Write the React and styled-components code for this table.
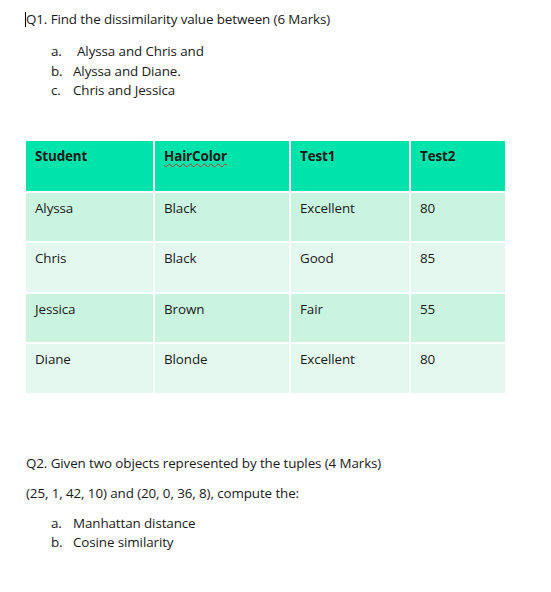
import styled, { createGlobalStyle } from 'styled-components'

const Global = createGlobalStyle`
    body {
        margin: 0;
        background: #fff;
        font-family: "Open Sans", "Noto Sans", sans-serif;
        color: #1a1a1a;
    }
`;

const Page = styled.div`
    width: 551px;
    height: 592px;
    padding: 11px 0 0 26px;
    box-sizing: border-box;
    font-size: 13.4px;
    letter-spacing: -0.1px;
`;

const Heading = styled.p`
    margin: 0;
    line-height: 17px;
    position: relative;

    &.cursor::before {
        content: "";
        position: absolute;
        left: -1px;
        top: 1px;
        width: 1px;
        height: 15px;
        background: #000;
    }
`;

const List = styled.ol`
    list-style: none;
    margin: ${(p) => p.$top}px 0 0;
    padding: 0 0 0 25px;
`;

const Item = styled.li`
    display: flex;
    line-height: 19.5px;

    .marker {
        width: ${(p) => (p.$wide ? 26 : 22)}px;
        flex-shrink: 0;
    }
`;

const Table = styled.div`
    margin-top: 40px;
    width: 479px;
    display: grid;
    grid-template-columns: 127px 134px 118px 94px;
    column-gap: 2px;
    row-gap: 2px;
`;

const Cell = styled.div`
    height: ${(p) => (p.$head ? 50 : 48.5)}px;
    padding: 7px 0 0 9px;
    box-sizing: border-box;
    font-weight: ${(p) => (p.$head ? 700 : 400)};
    background: ${(p) =>
        p.$head ? '#00e4ab' : p.$odd ? '#caf4df' : '#e4f8ef'};
    line-height: 17px;

    .squiggle {
        text-decoration: underline wavy #c0392b;
        text-decoration-thickness: 1px;
        text-underline-offset: 2px;
    }
`;

const Para = styled.p`
    margin: ${(p) => p.$top}px 0 0;
    line-height: 17px;
`;

const head = ['Student', 'HairColor', 'Test1', 'Test2'];
const rows = [
    ['Alyssa', 'Black', 'Excellent', '80'],
    ['Chris', 'Black', 'Good', '85'],
    ['Jessica', 'Brown', 'Fair', '55'],
    ['Diane', 'Blonde', 'Excellent', '80'],
];

export default function App() {
    return (
        <Page>
            <Global />
            <Heading className="cursor">
                Q1. Find the dissimilarity value between (6 Marks)
            </Heading>
            <List $top={14}>
                <Item $wide>
                    <span className="marker">a.</span>
                    <span>Alyssa and Chris and</span>
                </Item>
                <Item>
                    <span className="marker">b.</span>
                    <span>Alyssa and Diane.</span>
                </Item>
                <Item>
                    <span className="marker">c.</span>
                    <span>Chris and Jessica</span>
                </Item>
            </List>

            <Table>
                {head.map((h) => (
                    <Cell $head key={h}>
                        {h === 'HairColor' ? (
                            <span className="squiggle">{h}</span>
                        ) : (
                            h
                        )}
                    </Cell>
                ))}
                {rows.map((r, i) =>
                    r.map((c, j) => (
                        <Cell $odd={i % 2 === 0} key={i + '-' + j}>
                            {c}
                        </Cell>
                    ))
                )}
            </Table>

            <Para $top={62}>
                Q2. Given two objects represented by the tuples (4 Marks)
            </Para>
            <Para $top={13}>(25, 1, 42, 10) and (20, 0, 36, 8), compute the:</Para>
            <List $top={12}>
                <Item>
                    <span className="marker">a.</span>
                    <span>Manhattan distance</span>
                </Item>
                <Item>
                    <span className="marker">b.</span>
                    <span>Cosine similarity</span>
                </Item>
            </List>
        </Page>
    );
}
